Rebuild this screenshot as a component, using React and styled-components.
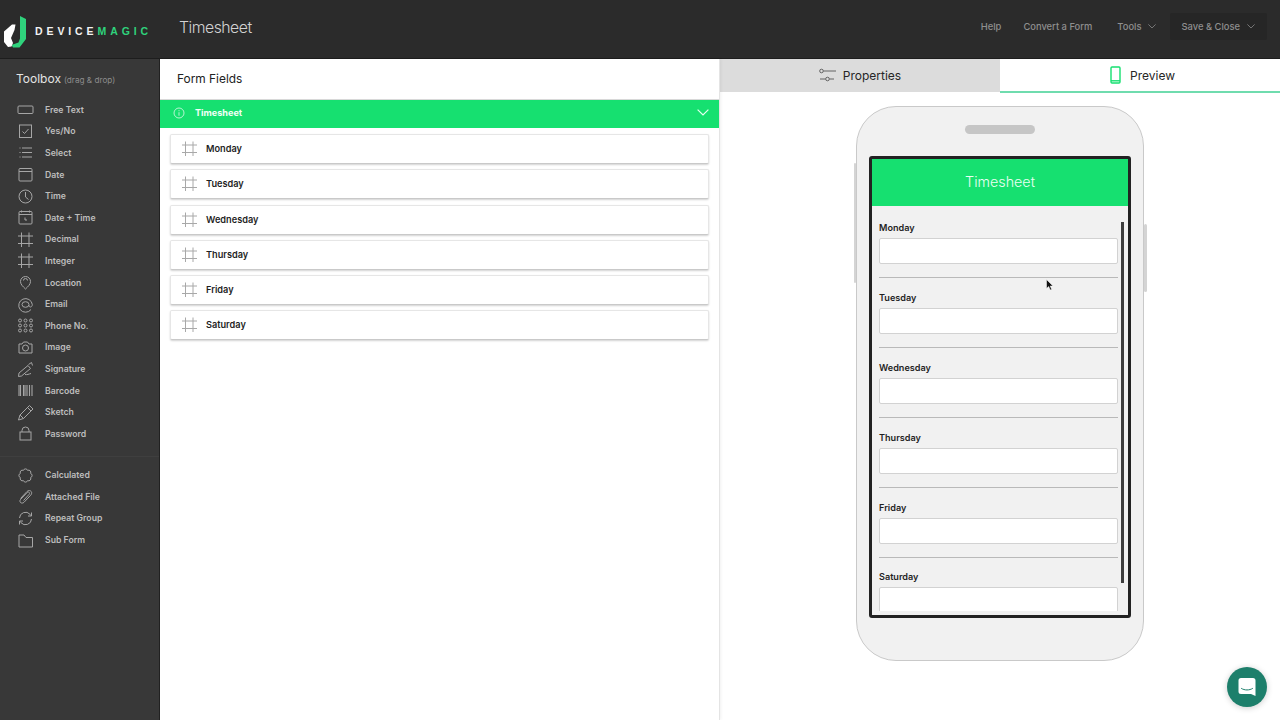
import React from 'react';
import styled, { createGlobalStyle } from 'styled-components';

const GREEN = '#16e070';
const FONT = '"Inter", "Liberation Sans", Arial, sans-serif';

const GlobalStyle = createGlobalStyle`
	html, body {
		margin: 0;
		height: 100%;
		overflow: hidden;
		background: #fff;
		font-family: ${FONT};
	}
	* {
		box-sizing: border-box;
	}
`;

const Page = styled.div`
	position: relative;
	width: 1280px;
	height: 720px;
	display: flex;
	flex-direction: column;
	overflow: hidden;
`;

const Header = styled.header`
	height: 59px;
	flex: none;
	background: #2b2b2b;
	border-bottom: 1px solid #1d1d1d;
	display: flex;
	align-items: center;
	padding: 0 13px 5px 4px;
`;

const Logo = styled.div`
	display: flex;
	align-items: center;
	width: 176px;
	margin-top: 9px;
`;

const LogoWord = styled.span`
	margin-left: 7px;
	font-family: 'Liberation Sans', Arial, sans-serif;
	font-size: 10.5px;
	font-weight: 700;
	letter-spacing: 3.9px;
	color: #f2f2f2;
	white-space: nowrap;
`;

const LogoAccent = styled.span`
	color: #2fd27c;
`;

const AppTitle = styled.div`
	font-size: 15.8px;
	font-weight: 300;
	letter-spacing: -0.5px;
	color: #d2d2d2;
	flex: 1;
	margin: 2px 0 0 -1px;
`;

const Nav = styled.nav`
	display: flex;
	align-items: center;
	font-size: 9.4px;
	font-weight: 500;
	color: #8f8f8f;
`;

const NavLink = styled.span`
	display: flex;
	align-items: center;
	gap: 7px;
	margin-left: ${({ $gap }) => $gap}px;
`;

const SaveButton = styled.span`
	display: flex;
	align-items: center;
	gap: 7px;
	height: 27px;
	padding: 0 12px 0 11px;
	margin-left: 14px;
	background: #262626;
	border-radius: 2px;
`;

const Body = styled.div`
	flex: 1;
	display: flex;
	min-height: 0;
`;

const Sidebar = styled.aside`
	width: 160px;
	flex: none;
	background: #383838;
	border-right: 1px solid #222;
	padding: 13px 0 0;
`;

const ToolboxTitle = styled.div`
	padding-left: 16px;
	font-size: 12px;
	color: #e4e4e4;
	height: 27px;
	line-height: 14px;
	white-space: nowrap;
`;

const ToolboxHint = styled.span`
	font-size: 8.2px;
	color: #8c8c8c;
	margin-left: 3px;
`;

const ToolGroup = styled.ul`
	list-style: none;
	margin: 0;
	padding: 0 0 11px;
	border-bottom: ${({ $divided }) => ($divided ? '1px solid #3f3f3f' : '0')};
`;

const ToolItem = styled.li`
	height: 21.6px;
	display: flex;
	align-items: center;
	padding-left: 17px;
	font-size: 8.7px;
	font-weight: 600;
	color: #bdbdbd;
	white-space: nowrap;
`;

const ToolIcon = styled.svg`
	width: 17px;
	height: 17px;
	margin-right: ${({ $gap }) => $gap || 11}px;
	flex: none;
	fill: none;
	stroke: ${({ $tone }) => $tone || '#a6a6a6'};
	stroke-width: 1;
`;

const SecondGroup = styled.div`
	padding-top: 8px;
`;

const FieldsPane = styled.section`
	width: 560px;
	flex: none;
	background: #fff;
	border-right: 1px solid #e4e4e4;
	box-shadow: 1px 0 3px rgba(0, 0, 0, 0.06);
	position: relative;
`;

const PaneTitle = styled.div`
	height: 41px;
	padding: 12px 0 0 17px;
	font-size: 11.9px;
	line-height: 16px;
	font-weight: 400;
	color: #222;
	border-bottom: 1px solid #d8d8d8;
`;

const FormBar = styled.div`
	height: 28px;
	background: ${GREEN};
	display: flex;
	align-items: center;
	padding: 0 10px 3px 13px;
	color: #f2fff7;
	font-size: 9.1px;
	font-weight: 700;
`;

const BarLabel = styled.span`
	flex: 1;
	margin-left: 10px;
`;

const FieldList = styled.div`
	padding: 6px 10px 0;
	display: flex;
	flex-direction: column;
	gap: 5.3px;
`;

const FieldCard = styled.div`
	height: 30px;
	background: #fff;
	border: 1px solid #e6e6e6;
	border-bottom-color: #c9c9c9;
	border-radius: 2px;
	box-shadow: 0 1px 2px rgba(0, 0, 0, 0.18);
	display: flex;
	align-items: center;
	padding: 0 0 1px 10px;
	font-size: 9.2px;
	font-weight: 600;
	color: #1f1f1f;
`;

const PreviewPane = styled.section`
	flex: 1;
	display: flex;
	flex-direction: column;
	min-width: 0;
`;

const Tabs = styled.div`
	display: flex;
	height: 34px;
	flex: none;
`;

const Tab = styled.div`
	flex: 0 0 280px;
	display: flex;
	align-items: center;
	justify-content: center;
	gap: ${({ $active }) => ($active ? '9px' : '6px')};
	font-size: 12px;
	color: #262626;
	background: ${({ $active }) => ($active ? '#fff' : '#dcdcdc')};
	border-bottom: ${({ $active }) => ($active ? '2px solid #6fdcae' : '0')};
	margin-bottom: ${({ $active }) => ($active ? '0' : '1px')};
	padding: ${({ $active }) => ($active ? '0 0 0 5px' : '0 0 1px')};
`;

const PhoneStage = styled.div`
	flex: 1;
	display: flex;
	justify-content: center;
	padding-top: 13px;
`;

const Phone = styled.div`
	position: relative;
	width: 288px;
	height: 555px;
	background: #f1f1f1;
	border: 1px solid #c9c9c9;
	border-radius: 40px;
	display: flex;
	flex-direction: column;
	align-items: center;
	padding-top: 18px;
`;

const Speaker = styled.div`
	width: 70px;
	height: 9px;
	border-radius: 5px;
	background: #c6c6c6;
	margin-bottom: 22px;
`;

const SideButton = styled.div`
	position: absolute;
	background: #d4d4d4;
	top: ${({ $top }) => $top}px;
	height: ${({ $height }) => $height}px;
	${({ $side }) => ($side === 'left' ? 'left: -3px; width: 2px;' : 'right: -4px; width: 3px;')}
	border-radius: 2px;
`;

const Screen = styled.div`
	position: relative;
	width: 262px;
	height: 462px;
	border: 3px solid #222;
	border-radius: 3px;
	overflow: hidden;
	background: #f1f1f1;
`;

const ScreenHeader = styled.div`
	height: 47px;
	padding-bottom: 2px;
	background: ${GREEN};
	display: flex;
	align-items: center;
	justify-content: center;
	color: #eafff3;
	font-size: 14.3px;
	font-weight: 300;
`;

const ScreenBody = styled.div`
	height: 405px;
	overflow: hidden;
	padding: 15px 10px 0 7px;
`;

const Question = styled.div`
	height: 70px;
	font-size: 9.1px;
	font-weight: 600;
	color: #1f1f1f;
	line-height: 13px;
`;

const LastQuestion = styled(Question)`
	margin-top: -1px;
`;

const AnswerBox = styled.div`
	height: 26px;
	margin-top: 4px;
	background: #fff;
	border: 1px solid #d2d2d2;
	border-radius: 2px;
`;

const QuestionRule = styled.div`
	height: 1px;
	margin-top: 13px;
	background: #b9b9b9;
`;

const Scrollbar = styled.div`
	position: absolute;
	top: 63px;
	right: 4.5px;
	width: 2.5px;
	height: 361px;
	background: #3d3d3d;
`;

const Cursor = styled.svg`
	position: absolute;
	left: 1046px;
	top: 279px;
	width: 8px;
	height: 12px;
`;

const ChatButton = styled.div`
	position: absolute;
	right: 13.5px;
	bottom: 13px;
	width: 40px;
	height: 40px;
	border-radius: 50%;
	background: #1d7f6b;
	box-shadow: 0 1px 6px rgba(0, 0, 0, 0.2);
	display: flex;
	align-items: center;
	justify-content: center;
`;

const Chevron = ({ color = '#8a8a8a', size = 8 }) => (
	<svg width={size} height={size * 0.6} viewBox="0 0 10 6" fill="none" stroke={color} strokeWidth="1">
		<path d="M.5.5 5 5 9.5.5" />
	</svg>
);

const hash = <path d="M4.5 1.5V16M12 1.5V16M1 5h15M1 12.5h15" />;

const TOOL_ICONS = {
	text: <rect x="1" y="5" width="15" height="7.5" rx="1" />,
	check: (
		<>
			<rect x="2.5" y="2" width="12" height="12.5" />
			<path d="m5.5 8.5 2 2 4-4.5" />
		</>
	),
	select: <path d="M2.5 4h1M5 4h10M2.5 8.5h1M5 8.5h10M2.5 13h1M5 13h10" />,
	date: (
		<>
			<rect x="2" y="2.5" width="13" height="12.5" rx="1" />
			<path d="M2 5.5h13" />
		</>
	),
	time: (
		<>
			<circle cx="8.5" cy="8.5" r="6.5" />
			<path d="M8.5 4v5l3 2.5" />
		</>
	),
	datetime: (
		<>
			<rect x="2" y="2.5" width="13" height="12.5" rx="1" />
			<path d="M2 5.5h13M4.5 1.5v2M12.5 1.5v2M8 8.5V11h2" />
		</>
	),
	hash,
	location: (
		<>
			<path d="M8.5 15C6 12.5 3.5 10.5 3.5 7.5a5 5 0 0 1 10 0c0 3-2.5 5-5 7.5Z" />
			<path d="M6.5 6.5a2 2 0 0 1 4 0" />
		</>
	),
	email: (
		<>
			<path d="M14 13.5A6.8 6.8 0 1 1 15.3 8.5c0 1.5-.8 2.5-1.8 2.5s-1.5-.8-1.5-1.8" />
			<ellipse cx="8.5" cy="8.5" rx="3.5" ry="2.8" />
		</>
	),
	phone: (
		<>
			{[3.5, 8.5, 13.5].map(cy =>
				[3, 8.5, 14].map(cx => <circle key={`${cx}-${cy}`} cx={cx} cy={cy} r="1.5" />),
			)}
		</>
	),
	image: (
		<>
			<path d="M2 5h3l1.5-2h4L12 5h3v9H2Z" />
			<circle cx="8.5" cy="9" r="3" />
		</>
	),
	signature: (
		<>
			<path d="m2 13 9-7.5 2.5 3-9 7.5-3 .5Z" />
			<path d="M11.5 4.5 14.5 2.5l1 3M8 14.5c2 .5 4-.5 6-1" />
		</>
	),
	barcode: <path d="M2 3v11M3.5 3v11M6.5 3v11M8 3v11M10 3v11M12.5 3v11M15 3v11" strokeWidth="1.1" />,
	sketch: (
		<>
			<path d="m1.5 16 1.5-5L12.5 1.5 16 5l-9.5 9.5Z" />
			<path d="m3 11 3.5 3.5M10.5 3.5 14 7" />
		</>
	),
	password: (
		<>
			<rect x="3" y="7" width="11" height="8" />
			<path d="M5 7V5.5a3.5 3.5 0 0 1 7 0V7" />
		</>
	),
	calculated: (
		<path d="M6.4 3.42A2.2 2.2 0 0 1 10.6 3.42 2.2 2.2 0 0 1 13.58 6.4 2.2 2.2 0 0 1 13.58 10.6 2.2 2.2 0 0 1 10.6 13.58 2.2 2.2 0 0 1 6.4 13.58 2.2 2.2 0 0 1 3.42 10.6 2.2 2.2 0 0 1 3.42 6.4 2.2 2.2 0 0 1 6.4 3.42Z" />
	),
	attach: (
		<path d="M3.5 10.5 10 3.5c1.5-1.5 3.5-1 4.2 0 .8 1 .6 2.5-.5 3.7L7 14.3c-1 1-2.7 1-3.5.2-.8-.8-.8-2.2.2-3.2l6.5-6.8c.6-.6 1.5-.6 2-.1s.5 1.3-.1 2L6.5 12.5" />
	),
	repeat: (
		<>
			<path d="M2.5 8a6 6 0 0 1 10.5-3.7L14.5 6M14.5 9a6 6 0 0 1-10.5 3.7L2.5 11" />
			<path d="M14.5 2.5V6H11M2.5 14.5V11H6" />
		</>
	),
	folder: <path d="M2 3h5l2 2.5h6.5V15H2Z" />,
};

const MAIN_TOOLS = [
	['Free Text', 'text'],
	['Yes/No', 'check'],
	['Select', 'select'],
	['Date', 'date'],
	['Time', 'time'],
	['Date + Time', 'datetime'],
	['Decimal', 'hash'],
	['Integer', 'hash'],
	['Location', 'location'],
	['Email', 'email'],
	['Phone No.', 'phone'],
	['Image', 'image'],
	['Signature', 'signature'],
	['Barcode', 'barcode'],
	['Sketch', 'sketch'],
	['Password', 'password'],
];

const EXTRA_TOOLS = [
	['Calculated', 'calculated'],
	['Attached File', 'attach'],
	['Repeat Group', 'repeat'],
	['Sub Form', 'folder'],
];

const DAYS = ['Monday', 'Tuesday', 'Wednesday', 'Thursday', 'Friday', 'Saturday'];

const Tool = ({ label, icon }) => (
	<ToolItem>
		<ToolIcon viewBox="0 0 17 17">{TOOL_ICONS[icon]}</ToolIcon>
		{label}
	</ToolItem>
);

const LogoMark = () => (
	<svg width="24" height="33" viewBox="0 0 24 33">
		<path fill="#2fd27c" d="M16 1 22 4v20l-6.5 8.5H9L7.5 30l7-2.5 1.5-4Z" />
		<path fill="#fff" d="M0 16.5 8 9.500h3.500L10.500 15 7 23l2 5-1.500 3.500-3.500.5L0 27Z" />
	</svg>
);

export default function App() {
	return (
		<Page>
			<GlobalStyle />
			<Header>
				<Logo>
					<LogoMark />
					<LogoWord>
						DEVICE<LogoAccent>MAGIC</LogoAccent>
					</LogoWord>
				</Logo>
				<AppTitle>Timesheet</AppTitle>
				<Nav>
					<NavLink $gap={0}>Help</NavLink>
					<NavLink $gap={22}>Convert a Form</NavLink>
					<NavLink $gap={25}>
						Tools <Chevron />
					</NavLink>
					<SaveButton>
						Save &amp; Close <Chevron />
					</SaveButton>
				</Nav>
			</Header>
			<Body>
				<Sidebar>
					<ToolboxTitle>
						Toolbox<ToolboxHint>(drag &amp; drop)</ToolboxHint>
					</ToolboxTitle>
					<ToolGroup $divided>
						{MAIN_TOOLS.map(([label, icon]) => (
							<Tool key={label} label={label} icon={icon} />
						))}
					</ToolGroup>
					<SecondGroup>
						<ToolGroup>
							{EXTRA_TOOLS.map(([label, icon]) => (
								<Tool key={label} label={label} icon={icon} />
							))}
						</ToolGroup>
					</SecondGroup>
				</Sidebar>
				<FieldsPane>
					<PaneTitle>Form Fields</PaneTitle>
					<FormBar>
						<svg width="12" height="12" viewBox="0 0 12 12" fill="none" stroke="#c8f7dc" strokeWidth="0.9">
							<circle cx="6" cy="6" r="5" />
							<path d="M6 5.2v3.5M6 3.2v1" />
						</svg>
						<BarLabel>Timesheet</BarLabel>
						<Chevron color="#e6fff0" size={12} />
					</FormBar>
					<FieldList>
						{DAYS.map(day => (
							<FieldCard key={day}>
								<ToolIcon $tone="#a8a8a8" $gap={8} viewBox="0 0 17 17">
									{hash}
								</ToolIcon>
								{day}
							</FieldCard>
						))}
					</FieldList>
				</FieldsPane>
				<PreviewPane>
					<Tabs>
						<Tab>
							<svg width="18" height="14" viewBox="0 0 18 14" fill="none" stroke="#555" strokeWidth="0.9">
								<circle cx="2.5" cy="3" r="1.8" />
								<path d="M4.5 3H17M1 11h5.5" />
								<circle cx="8.5" cy="11" r="1.8" />
								<path d="M10.5 11H15" />
							</svg>
							Properties
						</Tab>
						<Tab $active>
							<svg width="11" height="18" viewBox="0 0 11 18" fill="none" stroke={GREEN} strokeWidth="1.4">
								<rect x="1" y="1" width="9" height="16" rx="1" />
								<path d="M1 14.8h9" />
							</svg>
							Preview
						</Tab>
					</Tabs>
					<PhoneStage>
						<Phone>
							<SideButton $side="left" $top={56} $height={120} />
							<SideButton $side="right" $top={117} $height={68} />
							<Speaker />
							<Screen>
								<ScreenHeader>Timesheet</ScreenHeader>
								<ScreenBody>
									{DAYS.slice(0, 5).map(day => (
										<Question key={day}>
											{day}
											<AnswerBox />
											<QuestionRule />
										</Question>
									))}
									<LastQuestion>
										Saturday
										<AnswerBox />
									</LastQuestion>
								</ScreenBody>
								<Scrollbar />
							</Screen>
						</Phone>
					</PhoneStage>
				</PreviewPane>
			</Body>
			<Cursor viewBox="0 0 8 12">
				<path d="M.5.5v9l2.2-2 1.5 3.5 1.5-.6L4.2 7H7Z" fill="#111" stroke="#fff" strokeWidth="0.5" />
			</Cursor>
			<ChatButton>
				<svg width="18" height="18" viewBox="0 0 18 18">
					<path fill="#fff" d="M3 0h12a2.5 2.5 0 0 1 2.5 2.5V18l-4.5-2H3a2.5 2.5 0 0 1-2.5-2.5v-11A2.5 2.5 0 0 1 3 0Z" />
					<path fill="none" stroke="#1d7f6b" strokeWidth="1" strokeLinecap="round" d="M3.5 10.5c3 2 8 2 11 0" />
				</svg>
			</ChatButton>
		</Page>
	);
}
